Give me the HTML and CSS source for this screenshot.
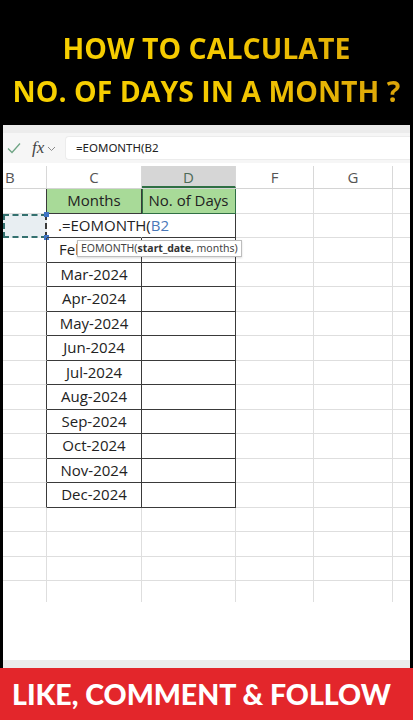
FILE: index.html
```
<!DOCTYPE html>
<html>
<head>
<meta charset="utf-8">
<link rel="stylesheet" href="styles.css">
</head>
<body>
<div class="page">
  <header class="title">
    <div class="tline">HOW TO CALCULATE</div>
    <div class="tline">NO. OF DAYS IN A MONTH ?</div>
  </header>
  <main class="sheet">
    <div class="ribbon"></div>
    <div class="fbar">
      <div class="fctl">
        <svg class="check" width="14" height="12" viewBox="0 0 14 12"><path d="M1 6.5 L5 10.5 L13 1.5" fill="none" stroke="#6ea484" stroke-width="1.3"/></svg>
        <span class="fx">fx</span>
        <svg class="chev" width="9" height="6" viewBox="0 0 9 6"><path d="M1 1 L4.5 4.5 L8 1" fill="none" stroke="#8a8a8a" stroke-width="1"/></svg>
      </div>
      <div class="finput">=EOMONTH(B2</div>
    </div>
    <div class="colhead">
      <div class="hc cb">B</div>
      <div class="hc">C</div>
      <div class="hc hsel">D</div>
      <div class="hc">F</div>
      <div class="hc">G</div>
      <div class="hc last"></div>
    </div>
    <div class="rows">
      <div class="row"><div class="c b tb"></div><div class="c t head">Months</div><div class="c t head dsel">No. of Days</div><div class="c"></div><div class="c"></div><div class="c last"></div></div>
      <div class="row"><div class="c b tb marquee"><span class="hdl h1"></span><span class="hdl h2"></span></div><div class="c t edit">.=EOMONTH(<span class="ref">B2</span></div><div class="c t"></div><div class="c"></div><div class="c"></div><div class="c last"></div>
        <div class="tip">EOMONTH(<b>start_date</b>, months)</div>
      </div>
      <div class="row"><div class="c b tb"></div><div class="c t feb">Feb-2024</div><div class="c t"></div><div class="c"></div><div class="c"></div><div class="c last"></div></div>
      <div class="row"><div class="c b tb"></div><div class="c t">Mar-2024</div><div class="c t"></div><div class="c"></div><div class="c"></div><div class="c last"></div></div>
      <div class="row"><div class="c b tb"></div><div class="c t">Apr-2024</div><div class="c t"></div><div class="c"></div><div class="c"></div><div class="c last"></div></div>
      <div class="row"><div class="c b tb"></div><div class="c t">May-2024</div><div class="c t"></div><div class="c"></div><div class="c"></div><div class="c last"></div></div>
      <div class="row"><div class="c b tb"></div><div class="c t">Jun-2024</div><div class="c t"></div><div class="c"></div><div class="c"></div><div class="c last"></div></div>
      <div class="row"><div class="c b tb"></div><div class="c t">Jul-2024</div><div class="c t"></div><div class="c"></div><div class="c"></div><div class="c last"></div></div>
      <div class="row"><div class="c b tb"></div><div class="c t">Aug-2024</div><div class="c t"></div><div class="c"></div><div class="c"></div><div class="c last"></div></div>
      <div class="row"><div class="c b tb"></div><div class="c t">Sep-2024</div><div class="c t"></div><div class="c"></div><div class="c"></div><div class="c last"></div></div>
      <div class="row"><div class="c b tb"></div><div class="c t">Oct-2024</div><div class="c t"></div><div class="c"></div><div class="c"></div><div class="c last"></div></div>
      <div class="row"><div class="c b tb"></div><div class="c t">Nov-2024</div><div class="c t"></div><div class="c"></div><div class="c"></div><div class="c last"></div></div>
      <div class="row"><div class="c b tb"></div><div class="c t">Dec-2024</div><div class="c t"></div><div class="c"></div><div class="c"></div><div class="c last"></div></div>
      <div class="row"><div class="c b"></div><div class="c"></div><div class="c"></div><div class="c"></div><div class="c"></div><div class="c last"></div></div>
      <div class="row"><div class="c b"></div><div class="c"></div><div class="c"></div><div class="c"></div><div class="c"></div><div class="c last"></div></div>
      <div class="row"><div class="c b"></div><div class="c"></div><div class="c"></div><div class="c"></div><div class="c"></div><div class="c last"></div></div>
      <div class="row part"><div class="c b"></div><div class="c"></div><div class="c"></div><div class="c"></div><div class="c"></div><div class="c last"></div></div>
    </div>
    <div class="filler"></div>
    <div class="status"></div>
  </main>
  <footer class="footer">LIKE, COMMENT &amp; FOLLOW</footer>
</div>
</body>
</html>
```
FILE: styles.css
```
* { box-sizing: border-box; }
html, body { margin: 0; padding: 0; background: #000; }
.page { width: 413px; height: 720px; display: flex; flex-direction: column; background: #000; overflow: hidden; }

.title { height: 125px; padding-top: 27px; text-align: center; font-family: "Open Sans", "DejaVu Sans", sans-serif; font-weight: 700; font-size: 28.5px; line-height: 43px; letter-spacing: 0; }
.tline { background: linear-gradient(90deg, #f8d200 0%, #f4c800 55%, #d9a20a 100%); -webkit-background-clip: text; background-clip: text; color: transparent; }

.sheet { height: 543px; margin: 0 3px; background: #fff; display: flex; flex-direction: column; font-family: "Open Sans", "Noto Sans", sans-serif; }
.ribbon { height: 8px; background: #ececec; }
.fbar { height: 30px; background: #f6f6f6; display: flex; align-items: center; padding: 2px 0 3px 0; }
.fctl { width: 62px; display: flex; align-items: center; padding-left: 4px; gap: 0; }
.check { margin-right: 11px; }
.fx { font-family: "Liberation Serif", serif; font-style: italic; font-size: 17px; color: #444; margin-right: 3px; line-height: 1; }
.chev { margin-top: 2px; }
.finput { flex: 1; height: 24px; background: #fff; border-radius: 4px 0 0 4px; border: 1px solid #ececec; border-right: none; font-size: 11.5px; color: #222; padding-left: 10px; line-height: 22px; font-family: "Noto Sans", sans-serif; }

.colhead { margin-top: 3px; height: 23px; display: flex; border-bottom: 1px solid #d4d4d4; background: #fff; }
.hc { width: 95px; border-right: 1px solid #d8d8d8; text-align: center; font-size: 15px; color: #555; line-height: 22px; }
.hc:nth-child(1) { width: 44px; text-align: left; padding-left: 2px; }
.hc:nth-child(3) { width: 94px; }
.hc:nth-child(4) { width: 78px; }
.hc:nth-child(5) { width: 79px; }
.hc.last { flex: 1; border-right: none; }
.hc.hsel { background: #d6d6d6; color: #4d6b57; border-bottom: 2px solid #2f6f44; }

.rows { display: flex; flex-direction: column; }
.row { height: 24.5px; display: flex; position: relative; }
.row.part { height: 21px; }
.c { width: 95px; height: 100%; border-right: 1px solid #dedede; border-bottom: 1px solid #dedede; text-align: center; font-size: 15px; color: #222; line-height: 23px; white-space: nowrap; }
.c:nth-child(1) { width: 44px; }
.c:nth-child(3) { width: 94px; }
.c:nth-child(4) { width: 78px; }
.c:nth-child(5) { width: 79px; }
.c.last { flex: 1; border-right: none; }
.row.part .c { border-bottom: none; }
.c.tb { border-right-color: #3a3a3a; }
.c.t { border-right-color: #3a3a3a; border-bottom-color: #3a3a3a; }
.c.head { background: #a8da98; }
.c.dsel { border-color: #2f6f44; box-shadow: inset 1px 0 0 #2f6f44; }
.c.feb { text-align: left; padding-left: 12px; }

.marquee { position: relative; background: #e8eef2; border: 2px dashed #33706f; border-right: 2px dashed #33706f; }
.hdl { position: absolute; width: 5px; height: 5px; background: #3f74c4; right: -4px; }
.h1 { top: -4px; }
.h2 { bottom: -4px; }

.edit { text-align: left; padding-left: 11px; border-right-color: transparent !important; overflow: visible; position: relative; z-index: 1; }
.ref { color: #4a78b8; }

.tip { position: absolute; left: 74px; top: 26px; height: 17px; padding: 0 3px; background: #fff; border: 1px solid #bdbdbd; font-family: "Noto Sans", sans-serif; font-size: 10.5px; line-height: 15px; color: #444; box-shadow: 0 1px 2px rgba(0,0,0,0.15); z-index: 2; white-space: nowrap; }
.tip b { font-weight: 700; color: #333; }

.filler { flex: 1; }
.status { height: 8px; background: #ebebeb; }

.footer { height: 52px; background: #e3262b; color: #fff; font-family: "Lato", "Open Sans", sans-serif; font-weight: 900; font-size: 28.5px; line-height: 52px; padding-left: 12px; letter-spacing: 0; white-space: nowrap; }
```
